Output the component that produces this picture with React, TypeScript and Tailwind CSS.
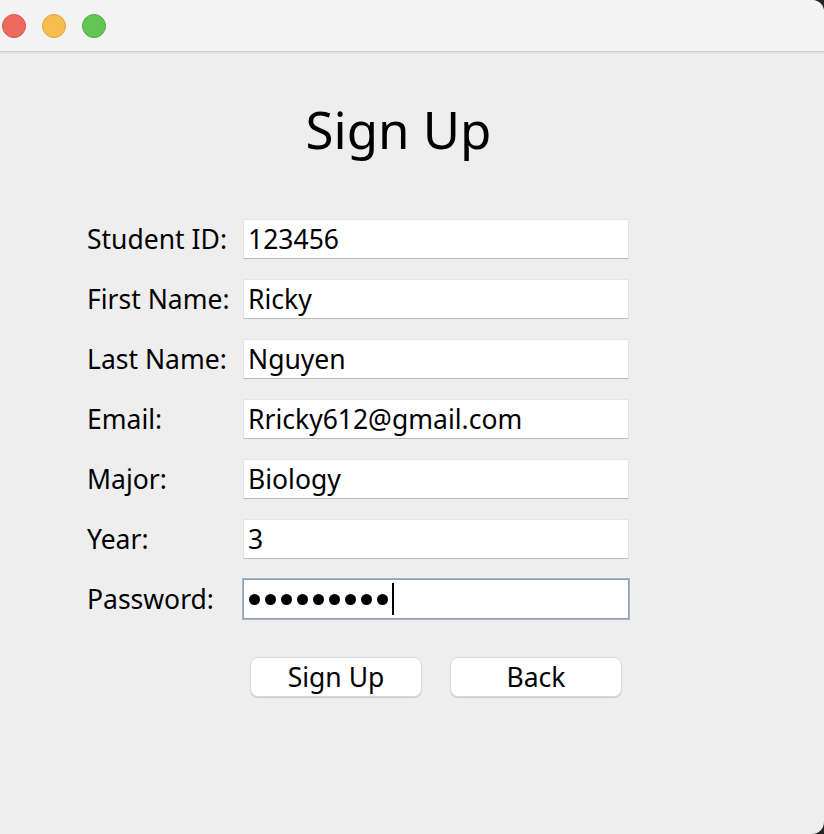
import React from 'react';

const font = { fontFamily: '"Noto Sans", "DejaVu Sans", sans-serif' };

interface FieldRow {
  label: string;
  value: string;
}

const rows: FieldRow[] = [
  { label: 'Student ID:', value: '123456' },
  { label: 'First Name:', value: 'Ricky' },
  { label: 'Last Name:', value: 'Nguyen' },
  { label: 'Email:', value: 'Rricky612@gmail.com' },
  { label: 'Major:', value: 'Biology' },
  { label: 'Year:', value: '3' },
];

const App: React.FC = () => {
  return (
    <div className="w-[824px] h-[834px] bg-[#262626] overflow-hidden" style={font}>
      <div className="h-full w-full rounded-r-[12px] bg-[#eeeeee] overflow-hidden flex flex-col">
        {/* Title bar */}
        <div className="h-[52px] shrink-0 bg-[#f3f3f3] flex items-center gap-[16px] pl-[2px] border-b border-[#cfcfcf]">
          <span className="w-[24px] h-[24px] rounded-full bg-[#ee6a5f] border border-[#d6554b]"></span>
          <span className="w-[24px] h-[24px] rounded-full bg-[#f5bf4f] border border-[#dba43c]"></span>
          <span className="w-[24px] h-[24px] rounded-full bg-[#62c554] border border-[#4fa843]"></span>
        </div>
        <div className="h-[2px] bg-[#e3e3e3]"></div>

        {/* Form */}
        <div className="flex flex-col items-center">
          <h1 className="mt-[50px] mr-[27px] text-[51px] leading-[51px] text-black">Sign Up</h1>

          <div className="mt-[64px] w-full pl-[87px] grid grid-cols-[156px_386px] gap-y-[20px] text-[26.5px] text-black">
            {rows.map(row => (
              <React.Fragment key={row.label}>
                <div className="h-[40px] leading-[40px] whitespace-nowrap">{row.label}</div>
                <div className="h-[40px] leading-[38px] bg-white border border-[#e4e4e4] border-b-[#b9b9b9] pl-[4px] whitespace-nowrap">
                  {row.value}
                </div>
              </React.Fragment>
            ))}

            <div className="h-[40px] leading-[40px] whitespace-nowrap">Password:</div>
            <div className="h-[40px] bg-white border border-[#8e9db3] ring-1 ring-[#a9b6c8] pl-[5px] flex items-center">
              <div className="flex items-center gap-[5px]">
                {Array.from({ length: 9 }).map((_, i) => (
                  <span key={i} className="w-[11px] h-[11px] rounded-full bg-black"></span>
                ))}
              </div>
              <span className="ml-[4px] w-[2px] h-[32px] bg-black"></span>
            </div>

            <div></div>
            <div className="mt-[18px] flex justify-center gap-[28px]">
              <button className="w-[172px] h-[40px] rounded-[8px] bg-white border border-[#dadada] shadow-[0_1px_1px_rgba(0,0,0,0.15)] text-[26.5px] leading-[38px] text-black">
                Sign Up
              </button>
              <button className="w-[172px] h-[40px] rounded-[8px] bg-white border border-[#dadada] shadow-[0_1px_1px_rgba(0,0,0,0.15)] text-[26.5px] leading-[38px] text-black">
                Back
              </button>
            </div>
          </div>
        </div>
      </div>
    </div>
  );
};

export default App;
